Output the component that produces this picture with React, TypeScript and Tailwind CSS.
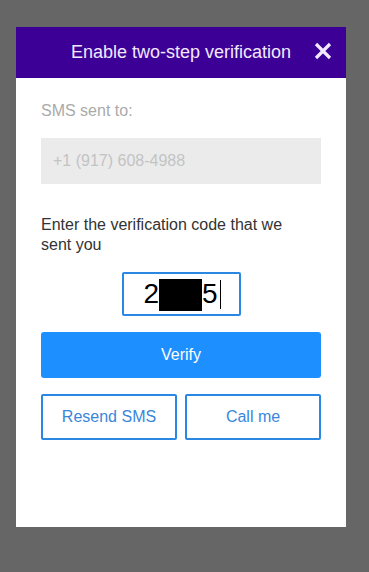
import React from "react";

export default function App() {
  return (
    <div
      className="w-[369px] h-[572px] bg-[#666666] pt-[27px] pl-[16px]"
      style={{ fontFamily: '"Liberation Sans", Arial, sans-serif' }}
    >
      <div className="w-[330px] h-[500px] bg-white flex flex-col">
        <div className="relative h-[51px] bg-[#3d0096] flex items-center justify-center">
          <span className="text-[18px] text-[#f1e9ff]">Enable two-step verification</span>
          <svg
            className="absolute left-[298px] top-[15px]"
            width="18"
            height="18"
            viewBox="0 0 18 18"
          >
            <path d="M2 2 L16 16 M16 2 L2 16" stroke="#f1e9ff" strokeWidth="3.2" strokeLinecap="butt" />
          </svg>
        </div>
        <div className="px-[25px] flex flex-col">
          <div className="mt-[24px] text-[16px] leading-[18px] text-[#aaaaaa]">SMS sent to:</div>
          <div className="mt-[18px] h-[46px] bg-[#ebebeb] flex items-center pl-[12px] text-[16px] text-[#c3c3c3]">
            +1 (917) 608-4988
          </div>
          <div className="mt-[31px] text-[16px] leading-[20px] text-[#333333]">
            Enter the verification code that we
            <br />
            sent you
          </div>
          <div className="mt-[17px] flex justify-center">
            <div className="w-[119px] h-[44px] border-2 border-[#2a88e4] rounded-[2px] flex items-center pl-[20px] text-[28px] leading-none text-black">
              <span>2</span>
              <span className="w-[43px] h-[32px] bg-black mt-[1px]"></span>
              <span>5</span>
              <span className="w-px h-[29px] bg-black ml-[2px]"></span>
            </div>
          </div>
          <button className="mt-[16px] h-[46px] w-full bg-[#1e8fff] rounded-[3px] text-white text-[16px]">
            Verify
          </button>
          <div className="mt-[16px] flex gap-[8px]">
            <button className="w-[136px] h-[46px] border-2 border-[#2a88e4] rounded-[2px] text-[16px] text-[#3a86db]">
              Resend SMS
            </button>
            <button className="w-[136px] h-[46px] border-2 border-[#2a88e4] rounded-[2px] text-[16px] text-[#3a86db]">
              Call me
            </button>
          </div>
        </div>
      </div>
    </div>
  );
}
